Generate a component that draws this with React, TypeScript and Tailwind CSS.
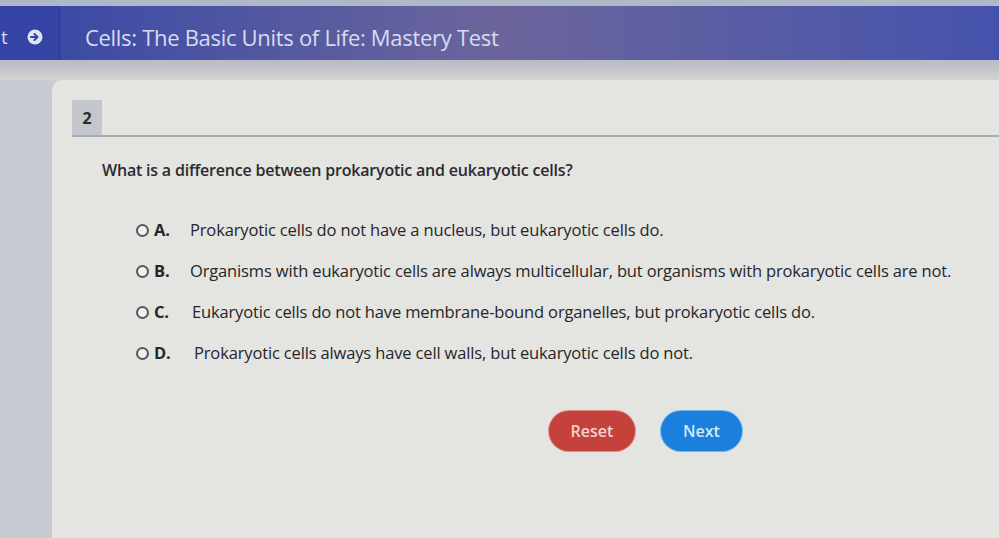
import React from "react";

const options = [
  { l: "A.", t: "Prokaryotic cells do not have a nucleus, but eukaryotic cells do.", pad: "pl-[18px]" },
  { l: "B.", t: "Organisms with eukaryotic cells are always multicellular, but organisms with prokaryotic cells are not.", pad: "pl-[18px]" },
  { l: "C.", t: "Eukaryotic cells do not have membrane-bound organelles, but prokaryotic cells do.", pad: "pl-[20px]" },
  { l: "D.", t: "Prokaryotic cells always have cell walls, but eukaryotic cells do not.", pad: "pl-[22px]" },
];

export default function App() {
  return (
    <div
      className="w-[999px] h-[538px] overflow-hidden flex flex-col bg-[#c9ccd0]"
      style={{ fontFamily: '"Open Sans", "Noto Sans", sans-serif' }}
    >
      <div className="h-[6px] bg-[#aeb8c6] shrink-0" />
      <div className="h-[54px] shrink-0 flex items-center pt-[8px] bg-gradient-to-r from-[#3646a6] via-[#6c659c] to-[#4552ac]">
        <div className="w-[60px] h-[54px] -mt-[8px] flex items-center pt-[8px] border-r border-[#2c3788] bg-[#3443a4]">
          <span className="text-[#d6dbef] text-[19px] ml-[1px]">t</span>
          <svg width="16" height="16" viewBox="0 0 16 16" className="ml-[19px]">
            <circle cx="8" cy="8" r="7.5" fill="#dfe3f3" />
            <path d="M4 8h6M7.5 5l3 3-3 3" stroke="#3443a4" strokeWidth="2" fill="none" strokeLinecap="round" strokeLinejoin="round" />
          </svg>
        </div>
        <div className="ml-[25px] text-[22px] text-[#d8dcf0] tracking-[-0.3px]">
          Cells: The Basic Units of Life: Mastery Test
        </div>
      </div>
      <div className="h-[20px] shrink-0 bg-gradient-to-b from-[#b9bbc4] to-[#d3d2d2]" />
      <div className="flex-1 flex">
        <div className="w-[52px] shrink-0 bg-[#c6cbd1]" />
        <div className="flex-1 bg-[#e4e4e0] rounded-tl-[10px] pt-[20px] pl-[20px]">
          <div className="flex items-end border-b-2 border-[#a9acb2]">
            <div className="w-[30px] h-[35px] bg-[#c3c6cc] flex items-center justify-center text-[16px] font-bold text-[#2a2a2e]">
              2
            </div>
          </div>
          <div className="mt-[21px] ml-[30px] text-[16px] font-semibold text-[#2b2b30] tracking-[-0.2px]">
            What is a difference between prokaryotic and eukaryotic cells?
          </div>
          <div className="mt-[37px] ml-[64px] flex flex-col gap-[18px]">
            {options.map((o) => (
              <div key={o.l} className="flex items-center h-[23px] text-[16.5px] text-[#26262c] tracking-[-0.15px]">
                <span className="w-[13px] h-[13px] rounded-full border-2 border-[#55575e] bg-[#f0f0ee]" />
                <span className="ml-[5px] font-bold w-[18px]">{o.l}</span>
                <span className={o.pad}>{o.t}</span>
              </div>
            ))}
          </div>
          <div className="mt-[46px] flex gap-[26px] pl-[477px]">
            <button className="w-[86px] h-[40px] rounded-full bg-[#c5413b] text-[#f1d6d3] text-[16px] font-semibold shadow-[0_0_0_1px_#e08a80]">
              Reset
            </button>
            <button className="w-[81px] h-[40px] rounded-full bg-[#1b7fdc] text-[#d7e8f8] text-[16px] font-semibold shadow-[0_0_0_1px_#6ab8f0]">
              Next
            </button>
          </div>
        </div>
      </div>
    </div>
  );
}
